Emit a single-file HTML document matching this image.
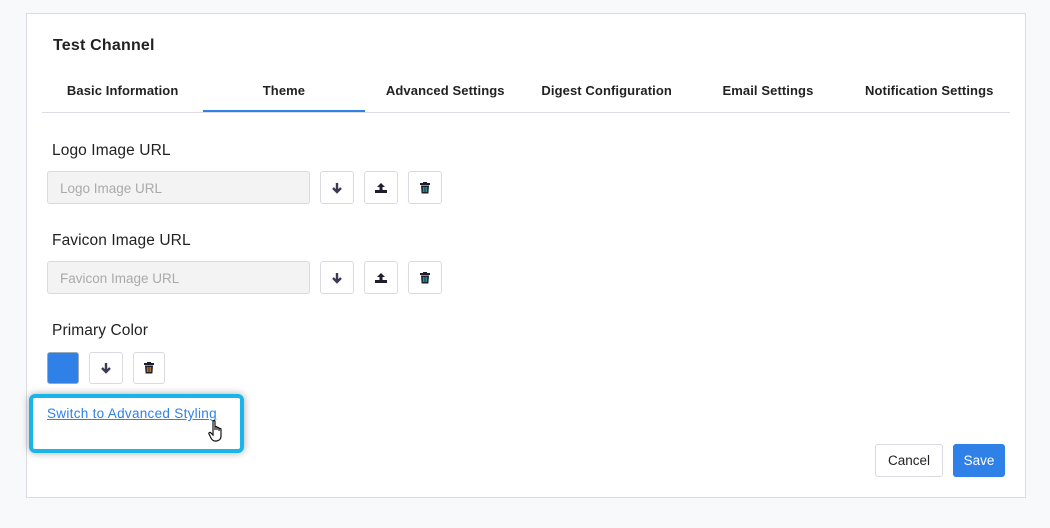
<!DOCTYPE html>
<html><head><meta charset="utf-8"><style>
*{box-sizing:border-box;margin:0;padding:0}
body{width:1050px;height:528px;background:#f8f9fb;font-family:"Liberation Sans",sans-serif;color:#1e1e2d;position:relative;overflow:hidden}
.card{position:absolute;left:26px;top:13px;width:1000px;height:485px;background:#fff;border:1px solid #dcdce4}
.a{position:absolute}
.title{left:53px;top:37px;font-size:16px;font-weight:bold;color:#222;letter-spacing:.2px}
.tab{top:83px;width:161.3px;text-align:center;font-size:13px;font-weight:bold;color:#222;letter-spacing:.1px}
.line{left:42px;top:112px;width:968px;height:1px;background:#dcdce6}
.act{left:203px;top:110px;width:162px;height:2px;background:#2f80e7}
.lbl{font-size:15.5px;color:#222;letter-spacing:.1px}
.inp{width:263px;height:33px;background:#f3f3f4;border:1px solid #d9d9de;border-radius:3px;font-size:13.5px;color:#aaa;padding:9px 12px}
.btn{width:34px;height:33px;border:1px solid #d9d9e2;border-radius:3px;background:#fff;display:flex;align-items:center;justify-content:center}
.hl{left:29px;top:394px;width:215px;height:59px;border:4px solid #19b4ea;border-radius:6px;box-shadow:0 0 8px rgba(0,0,0,.35)}
.link{left:47px;top:406px;font-size:13.5px;color:#2f80e7;text-decoration:underline;letter-spacing:.3px}
.cancel{left:875px;top:444px;width:68px;height:33px;border:1px solid #d9d9e0;border-radius:3px;font-size:13.5px;text-align:center;line-height:31px;color:#222}
.save{left:953px;top:444px;width:52px;height:33px;background:#2f80e7;border-radius:3px;font-size:13.5px;text-align:center;line-height:33px;color:#fff}
</style></head><body>
<div class="card"></div>
<div class="a title">Test Channel</div>
<div class="a tab" style="left:42px">Basic Information</div>
<div class="a tab" style="left:203.3px">Theme</div>
<div class="a tab" style="left:364.6px">Advanced Settings</div>
<div class="a tab" style="left:526px">Digest Configuration</div>
<div class="a tab" style="left:687.3px">Email Settings</div>
<div class="a tab" style="left:848.6px">Notification Settings</div>
<div class="a line"></div><div class="a act"></div>

<div class="a lbl" style="left:52px;top:142px">Logo Image URL</div>
<div class="a inp" style="left:47px;top:171px">Logo Image URL</div>
<div class="a btn" style="left:320px;top:171px"><svg width="12" height="12" viewBox="0 0 12 12"><path d="M6 1v9M2 6l4 4 4-4" stroke="#3a3a55" stroke-width="2.4" fill="none"/></svg></div>
<div class="a btn" style="left:364px;top:171px"><svg width="14" height="12" viewBox="0 0 14 12"><path d="M7 1l-4 4h2.5v3h3V5H11z" fill="#1e1e2d"/><rect x="1" y="8" width="12" height="3" fill="#1e1e2d"/></svg></div>
<div class="a btn" style="left:408px;top:171px"><svg width="10" height="12" viewBox="0 0 10 12"><rect x="0" y="1" width="10" height="2" fill="#1e1e2d"/><rect x="3" y="0" width="4" height="1.5" fill="#1e1e2d"/><path d="M1 3.5h8l-.6 8H1.6z" fill="#1e1e2d"/><path d="M3.3 5v5M5 5v5M6.7 5v5" stroke="#2bb5a8" stroke-width=".9"/></svg></div>

<div class="a lbl" style="left:52px;top:232px">Favicon Image URL</div>
<div class="a inp" style="left:47px;top:261px">Favicon Image URL</div>
<div class="a btn" style="left:320px;top:261px"><svg width="12" height="12" viewBox="0 0 12 12"><path d="M6 1v9M2 6l4 4 4-4" stroke="#3a3a55" stroke-width="2.4" fill="none"/></svg></div>
<div class="a btn" style="left:364px;top:261px"><svg width="14" height="12" viewBox="0 0 14 12"><path d="M7 1l-4 4h2.5v3h3V5H11z" fill="#1e1e2d"/><rect x="1" y="8" width="12" height="3" fill="#1e1e2d"/></svg></div>
<div class="a btn" style="left:408px;top:261px"><svg width="10" height="12" viewBox="0 0 10 12"><rect x="0" y="1" width="10" height="2" fill="#1e1e2d"/><rect x="3" y="0" width="4" height="1.5" fill="#1e1e2d"/><path d="M1 3.5h8l-.6 8H1.6z" fill="#1e1e2d"/><path d="M3.3 5v5M5 5v5M6.7 5v5" stroke="#2bb5a8" stroke-width=".9"/></svg></div>

<div class="a lbl" style="left:52px;top:322px">Primary Color</div>
<div class="a" style="left:47px;top:352px;width:32px;height:32px;background:#2f80e7;border:1px solid #9ab;border-radius:3px"></div>
<div class="a btn" style="left:89px;top:352px;height:32px"><svg width="12" height="12" viewBox="0 0 12 12"><path d="M6 1v9M2 6l4 4 4-4" stroke="#3a3a55" stroke-width="2.4" fill="none"/></svg></div>
<div class="a btn" style="left:133px;top:352px;width:32px;height:32px"><svg width="10" height="12" viewBox="0 0 10 12"><rect x="0" y="1" width="10" height="2" fill="#1e1e2d"/><rect x="3" y="0" width="4" height="1.5" fill="#1e1e2d"/><path d="M1 3.5h8l-.6 8H1.6z" fill="#1e1e2d"/><path d="M3.3 5v5M5 5v5M6.7 5v5" stroke="#e08a2a" stroke-width=".9"/></svg></div>

<div class="a hl"></div>
<div class="a link">Switch to Advanced Styling</div>
<svg class="a" style="left:207px;top:419px" width="20" height="24" viewBox="0 0 20 24"><path d="M6 2.5c0-1.3 2-1.3 2 0V11V8.5c0-1.3 2-1.3 2 0V11V9.5c0-1.3 2-1.3 2 0V12V10.5c0-1.3 2-1.3 2 0V17c0 3-2 5-5 5H8c-2 0-3-1-4-3L2 15c-.6-1.2.8-2.2 1.8-1.2L6 16z" fill="#fff" stroke="#111" stroke-width="1.2"/></svg>

<div class="a cancel">Cancel</div>
<div class="a save">Save</div>
</body></html>
